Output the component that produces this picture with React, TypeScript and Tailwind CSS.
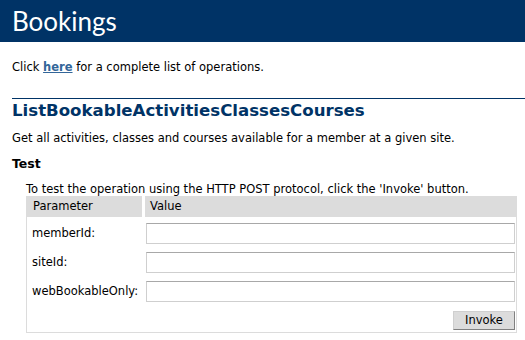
const params = ["memberId:", "siteId:", "webBookableOnly:"];

export default function App() {
  return (
    <div className="min-h-[340px] bg-white text-black [font-family:'DejaVu_Sans',Verdana,sans-serif] text-[11.5px]">
      <div className="h-[42px] bg-[#003366] pl-[12px] pt-[5px]">
        <h1 className="text-[26px] leading-[32px] text-white [font-family:Lato,Tahoma,sans-serif]">Bookings</h1>
      </div>

      <div className="pl-[12px]">
        <p className="mt-[18px] leading-[14px]">
          Click{" "}
          <a href="#" className="font-bold text-[#336699] underline">
            here
          </a>{" "}
          for a complete list of operations.
        </p>

        <h2 className="mt-[24px] border-t border-[#003366] pt-[2px] text-[16.6px] font-bold leading-[20px] text-[#003366]">
          ListBookableActivitiesClassesCourses
        </h2>

        <p className="mt-[10px] leading-[14px]">Get all activities, classes and courses available for a member at a given site.</p>

        <h3 className="mt-[12px] text-[12.5px] font-bold leading-[14px]">Test</h3>

        <div className="pl-[14px]">
          <p className="mt-[12px] leading-[13px]">
            To test the operation using the HTTP POST protocol, click the 'Invoke' button.
          </p>

          <div className="mr-[8px] border border-t-0 border-[#dcdcdc]">
            <div className="flex h-[21px] items-center gap-[3px] bg-white">
              <div className="flex h-full w-[115px] items-center bg-[#dcdcdc] pl-[6px]">Parameter</div>
              <div className="flex h-full flex-1 items-center bg-[#dcdcdc] pl-[5px]">Value</div>
            </div>
            <div className="mt-[6px] flex flex-col gap-[8px]">
              {params.map((p) => (
                <div key={p} className="flex items-center gap-[3px]">
                  <div className="w-[116px] pl-[5px]">{p}</div>
                  <input
                    type="text"
                    className="mr-px h-[21px] flex-1 border border-[#cfcfcf] border-t-[#a8a8a8] bg-white px-1 outline-none"
                  />
                </div>
              ))}
            </div>
            <div className="mt-[9px] mb-[2px] flex justify-end pr-[1px]">
              <button className="h-[19px] w-[62px] border border-[#808080] border-t-[#cfcfcf] border-l-[#cfcfcf] bg-[#dcdcdc] text-[11.5px] leading-[17px]">
                Invoke
              </button>
            </div>
          </div>
        </div>
      </div>
    </div>
  );
}
